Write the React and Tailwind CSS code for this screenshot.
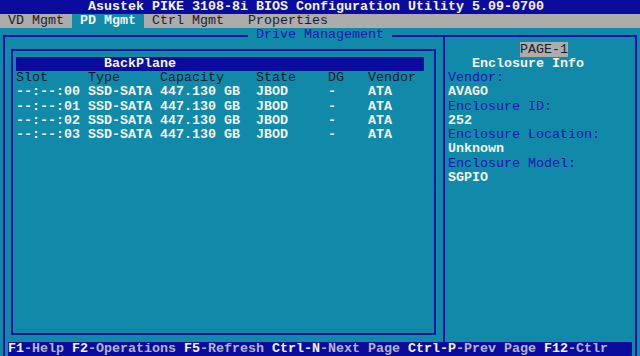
// BIOS-style configuration screen, 80x25 text grid (8px x 14.24px cells)
const rows = [
  ["--:--:00", "SSD-SATA", "447.130 GB", "JBOD", "-", "ATA"],
  ["--:--:01", "SSD-SATA", "447.130 GB", "JBOD", "-", "ATA"],
  ["--:--:02", "SSD-SATA", "447.130 GB", "JBOD", "-", "ATA"],
  ["--:--:03", "SSD-SATA", "447.130 GB", "JBOD", "-", "ATA"],
];

const enclosure = [
  ["Vendor:", "AVAGO"],
  ["Enclosure ID:", "252"],
  ["Enclosure Location:", "Unknown"],
  ["Enclosure Model:", "SGPIO"],
];

const keys = [
  ["F1", "-Help"],
  ["F2", "-Operations"],
  ["F5", "-Refresh"],
  ["Ctrl-N", "-Next Page"],
  ["Ctrl-P", "-Prev Page"],
  ["F12", "-Ctlr"],
];

function Line({ children, className = "" }) {
  return <div className={`h-[14.24px] whitespace-pre ${className}`}>{children}</div>;
}

export default function App() {
  return (
    <div
      className="w-[640px] h-[356px] flex flex-col bg-[#108aa8] text-[13.33px] leading-[14.24px] overflow-hidden"
      style={{ fontFamily: '"Liberation Mono", "DejaVu Sans Mono", monospace' }}
    >
      {/* title */}
      <Line className="bg-[#0b0c9e] text-[#f4f4f4] font-bold pl-[88px]">
        Asustek PIKE 3108-8i BIOS Configuration Utility 5.09-0700
      </Line>

      {/* menu */}
      <Line className="bg-[#acacac] text-[#1c1c28] flex">
        <span> VD Mgmt </span>
        <span className="bg-[#108aa8] text-[#f4f4f4] font-bold"> PD Mgmt </span>
        <span> Ctrl Mgmt   Properties</span>
      </Line>

      {/* body */}
      <div className="flex-1 flex flex-col pt-[6.5px]">
        <div className="relative flex-1 flex flex-col mx-[3px] border-x-2 border-t-2 border-[#0e14a0]">
          <span className="absolute left-[243px] top-[-8.5px] px-[8px] bg-[#108aa8] text-[#1414b0] h-[14.24px] whitespace-pre">
            Drive Management
          </span>

          <div className="flex-1 flex">
            {/* left panel */}
            <div className="w-[438px] flex flex-col">
              <div className="flex-1 mt-[12px] ml-[6px] mr-[7px] mb-[6.8px] border-2 border-[#0e14a0]">
                <div className="mt-[6px] ml-[3px] w-[408px] h-[14.24px] bg-[#0b0c9e] text-[#f4f4f4] font-bold pl-[88px] whitespace-pre">
                  BackPlane
                </div>
                <div className="pl-[3px]">
                  <Line className="text-[#10182c]">
                    {"Slot     Type     Capacity    State    DG   Vendor"}
                  </Line>
                  {rows.map((r) => (
                    <Line key={r[0]} className="text-[#f4f4f4] font-bold">
                      {`${r[0]} ${r[1]} ${r[2]}  ${r[3]}     ${r[4]}    ${r[5]}`}
                    </Line>
                  ))}
                </div>
              </div>
            </div>

            {/* right panel */}
            <div className="flex-1 border-l-2 border-[#0e14a0] pt-[5.7px] pl-[3px]">
              <Line className="pl-[72px]">
                <span className="bg-[#acacac] text-[#1c1c28]">PAGE-1</span>
              </Line>
              <Line className="pl-[24px] text-[#f4f4f4] font-bold">Enclosure Info</Line>
              {enclosure.map(([label, value]) => (
                <div key={label}>
                  <Line className="text-[#1414b4]">{label}</Line>
                  <Line className="text-[#f4f4f4] font-bold">{value}</Line>
                </div>
              ))}
            </div>
          </div>

          {/* status bar */}
          <Line className="mx-[3px] bg-[#0b0c9e] font-bold">
            {keys.map(([k, d], i) => (
              <span key={k}>
                <span className="text-[#f4f4f4]">{k}</span>
                <span className="text-[#b4b4cc]">{d}</span>
                {i < keys.length - 1 ? " " : ""}
              </span>
            ))}
          </Line>
        </div>
      </div>
    </div>
  );
}
